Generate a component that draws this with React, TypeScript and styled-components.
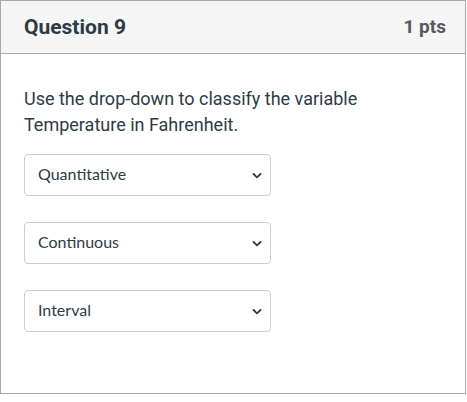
import React from 'react'
import styled, { createGlobalStyle } from 'styled-components'

const GlobalStyle = createGlobalStyle`
  body {
    margin: 0;
    background: #ffffff;
    font-family: Roboto, 'Liberation Sans', sans-serif;
  }
`

const questions = [
  { id: 'kind', value: 'Quantitative', options: ['[ Select ]', 'Quantitative', 'Qualitative'] },
  { id: 'type', value: 'Continuous', options: ['[ Select ]', 'Continuous', 'Discrete'] },
  { id: 'level', value: 'Interval', options: ['[ Select ]', 'Nominal', 'Ordinal', 'Interval', 'Ratio'] },
]

const App: React.FC = () => {
  return (
    <>
      <GlobalStyle />
      <StyledCard>
        <StyledHeader>
          <StyledTitle>Question 9</StyledTitle>
          <StyledPoints>1 pts</StyledPoints>
        </StyledHeader>
        <StyledBody>
          <StyledPrompt>
            Use the drop-down to classify the variable
            <br />
            Temperature in Fahrenheit.
          </StyledPrompt>
          <StyledSelectList>
            {questions.map((q) => (
              <StyledSelectWrap key={q.id}>
                <StyledSelect defaultValue={q.value}>
                  {q.options.map((o) => (
                    <option key={o} value={o}>
                      {o}
                    </option>
                  ))}
                </StyledSelect>
                <Chevron />
              </StyledSelectWrap>
            ))}
          </StyledSelectList>
        </StyledBody>
      </StyledCard>
    </>
  )
}

const Chevron: React.FC = () => (
  <StyledChevron width="10" height="6" viewBox="0 0 10 6">
    <path d="M1.5 1 L5 4.4 L8.5 1" fill="none" stroke="#2d3b45" strokeWidth="1.8" strokeLinecap="round" strokeLinejoin="round" />
  </StyledChevron>
)

const StyledCard = styled.div`
  width: 466px;
  height: 394px;
  box-sizing: border-box;
  border: 1px solid #a8a8a8;
  background: #ffffff;
  display: flex;
  flex-direction: column;
`

const StyledHeader = styled.div`
  height: 53px;
  box-sizing: border-box;
  background: #f5f5f5;
  border-bottom: 1px solid #a8a8a8;
  display: flex;
  align-items: center;
  justify-content: space-between;
  padding: 0 19px 1px 23px;
`

const StyledTitle = styled.div`
  font-size: 21px;
  font-weight: 700;
  color: #2d3b45;
`

const StyledPoints = styled.div`
  font-size: 19px;
  font-weight: 700;
  color: #585858;
`

const StyledBody = styled.div`
  padding: 32px 23px 0;
`

const StyledPrompt = styled.div`
  font-size: 18px;
  line-height: 26px;
  color: #2d3b45;
`

const StyledSelectList = styled.div`
  display: flex;
  flex-direction: column;
  gap: 26px;
  margin-top: 16px;
`

const StyledSelectWrap = styled.div`
  position: relative;
  width: 247px;
  height: 42px;
`

const StyledSelect = styled.select`
  appearance: none;
  width: 100%;
  height: 100%;
  box-sizing: border-box;
  border: 1px solid #c7cdd1;
  border-radius: 4px;
  background: #ffffff;
  padding: 0 30px 3px 13px;
  font-family: Lato, 'Liberation Sans', sans-serif;
  font-size: 16px;
  color: #2d3b45;
  outline: none;
`

const StyledChevron = styled.svg`
  position: absolute;
  right: 9px;
  top: 19px;
  pointer-events: none;
`

export default App
